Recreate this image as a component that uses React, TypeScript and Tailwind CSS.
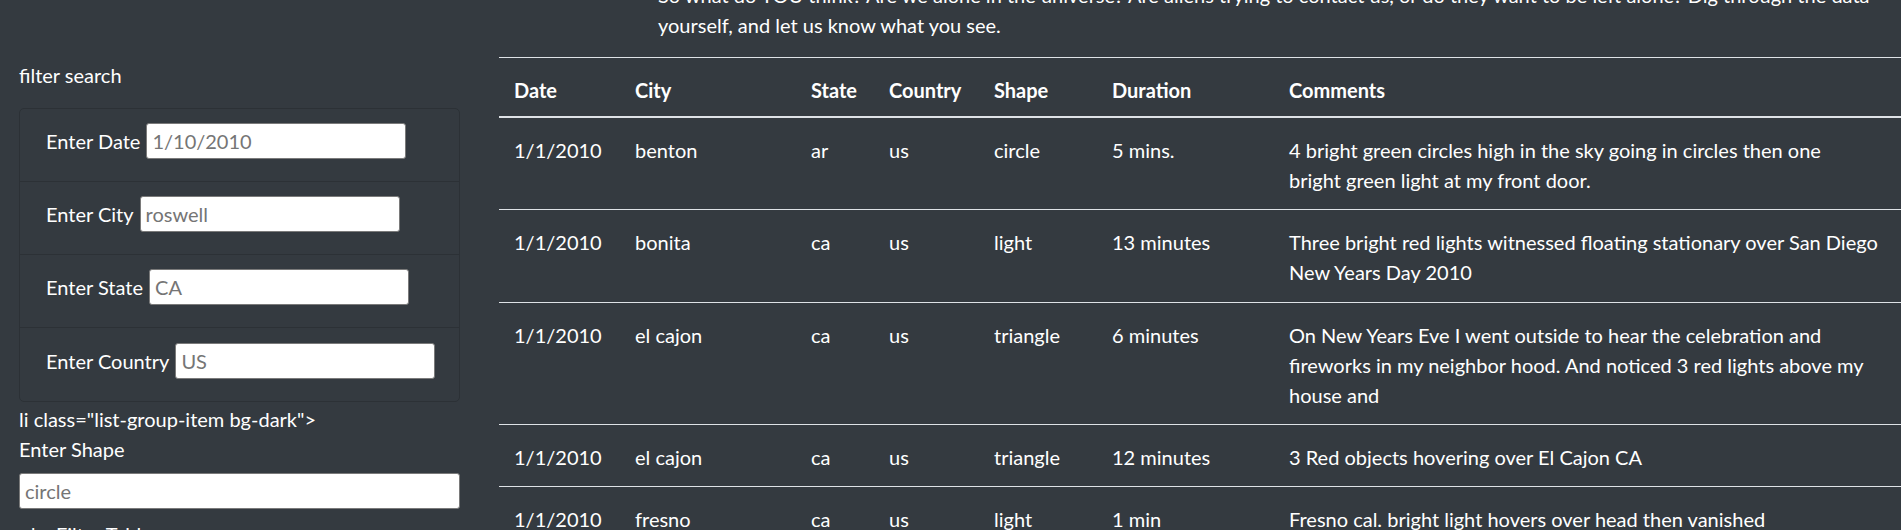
const sightings = [
  {
    date: "1/1/2010",
    city: "benton",
    state: "ar",
    country: "us",
    shape: "circle",
    duration: "5 mins.",
    comments:
      "4 bright green circles high in the sky going in circles then one\nbright green light at my front door.",
  },
  {
    date: "1/1/2010",
    city: "bonita",
    state: "ca",
    country: "us",
    shape: "light",
    duration: "13 minutes",
    comments:
      "Three bright red lights witnessed floating stationary over San Diego New Years Day 2010",
  },
  {
    date: "1/1/2010",
    city: "el cajon",
    state: "ca",
    country: "us",
    shape: "triangle",
    duration: "6 minutes",
    comments:
      "On New Years Eve I went outside to hear the celebration and fireworks in my neighbor hood. And noticed 3 red lights above my house and",
  },
  {
    date: "1/1/2010",
    city: "el cajon",
    state: "ca",
    country: "us",
    shape: "triangle",
    duration: "12 minutes",
    comments: "3 Red objects hovering over El Cajon CA",
  },
  {
    date: "1/1/2010",
    city: "fresno",
    state: "ca",
    country: "us",
    shape: "light",
    duration: "1 min",
    comments: "Fresno cal. bright light hovers over head then vanished",
  },
];

const filters = [
  { label: "Enter Date", placeholder: "1/10/2010" },
  { label: "Enter City", placeholder: "roswell" },
  { label: "Enter State", placeholder: "CA" },
  { label: "Enter Country", placeholder: "US" },
];

const inputClass =
  "h-[36px] shrink-0 rounded-[3px] border-[1.5px] border-[#7a7a7a] bg-white px-[5px] text-[20px] text-[#495057] placeholder:text-[#757575] focus:outline-none";

const cellClass = "px-[15px] pt-[17px] pb-[13px] align-top text-left";

export default function App() {
  return (
    <div className="h-[530px] overflow-hidden bg-[#343a40] font-['Lato','Segoe_UI',sans-serif] text-[20px] leading-[30px] text-white">
      <p className="-mt-[20px] mb-[17px] pl-[658px] pr-[15px]">
        <span className="block whitespace-nowrap">
          So what do YOU think? Are we alone in the universe? Are aliens trying to contact us, or do they want to be left alone? Dig through the data
        </span>
        <span className="block">yourself, and let us know what you see.</span>
      </p>

      <div className="flex">
        <aside className="w-[499px] shrink-0 pl-[19px] pr-[39px] pt-[3px]">
          <div className="mb-[18px]">filter search</div>
          <ul className="rounded-[5px] border border-[#2c3136]">
            {filters.map((f, i) => (
              <li
                key={f.label}
                className={`flex h-[73px] items-center gap-[6px] px-[26px] pb-[8px] ${
                  i < filters.length - 1 ? "border-b border-[#2c3136]" : ""
                }`}
              >
                <label className="whitespace-nowrap">{f.label}</label>
                <input
                  type="text"
                  placeholder={f.placeholder}
                  className={`${inputClass} w-[260px]`}
                />
              </li>
            ))}
          </ul>
          <div className="mt-[2px]">li class="list-group-item bg-dark"&gt;</div>
          <div>Enter Shape</div>
          <input
            type="text"
            placeholder="circle"
            className={`${inputClass} mt-[9px] block h-[35px] w-full`}
          />
          <div className="mt-[10px] whitespace-nowrap">&lt;!-- Filter Table</div>
        </aside>

        <table className="w-[1402px] table-fixed border-collapse">
          <colgroup>
            <col className="w-[121px]" />
            <col className="w-[176px]" />
            <col className="w-[78px]" />
            <col className="w-[105px]" />
            <col className="w-[118px]" />
            <col className="w-[177px]" />
            <col className="w-[627px]" />
          </colgroup>
          <thead>
            <tr className="border-t border-b-2 border-t-[#dee2e6] border-b-[#dee2e6]">
              {["Date", "City", "State", "Country", "Shape", "Duration", "Comments"].map((h) => (
                <th key={h} className="px-[15px] pt-[17px] pb-[11px] text-left align-bottom font-bold">
                  {h}
                </th>
              ))}
            </tr>
          </thead>
          <tbody>
            {sightings.map((s, i) => (
              <tr key={i} className="border-b border-[#dee2e6]">
                <td className={cellClass}>{s.date}</td>
                <td className={cellClass}>{s.city}</td>
                <td className={cellClass}>{s.state}</td>
                <td className={cellClass}>{s.country}</td>
                <td className={cellClass}>{s.shape}</td>
                <td className={cellClass}>{s.duration}</td>
                <td className={`${cellClass} whitespace-pre-line`}>{s.comments}</td>
              </tr>
            ))}
          </tbody>
        </table>
      </div>
    </div>
  );
}
